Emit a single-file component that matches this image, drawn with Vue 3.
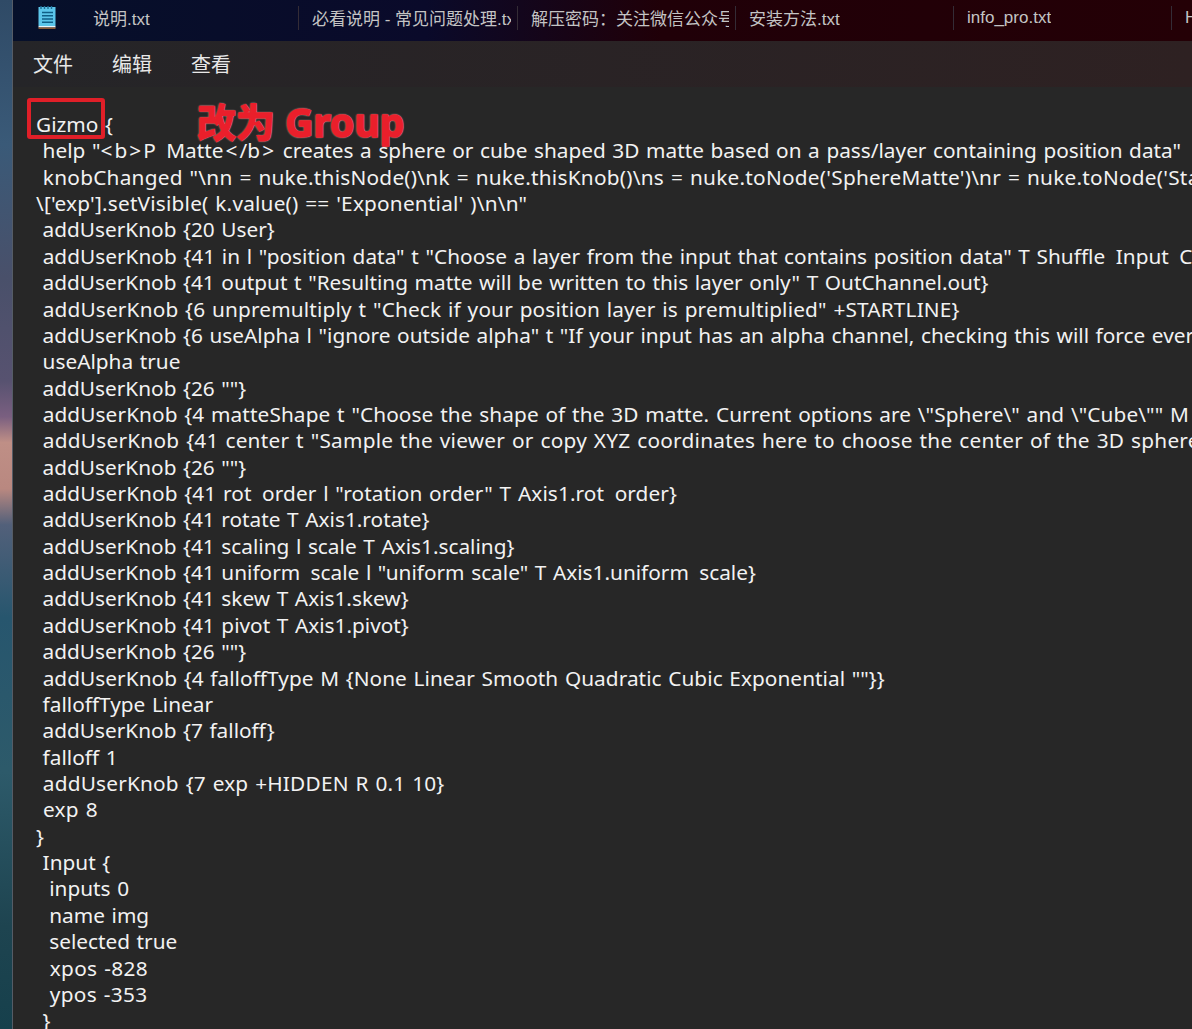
<template>
  <div class="screen">
    <div class="wallpaper"></div>
    <div class="window">
      <div class="tabbar">
        <div class="tab-icon">
          <svg width="18" height="23" viewBox="0 0 18 23">
            <rect x="0.5" y="1" width="17" height="19" fill="#5cc6ea" />
            <rect x="0.5" y="20" width="17" height="1.500" fill="#e8f4f8" />
            <rect x="0.5" y="21.500" width="17" height="1.500" fill="#8a5a34" />
            <path d="M3 0v3M6.500 0v3M10 0v3M13.500 0v3" stroke="#1f6f96" stroke-width="1.400" />
            <path d="M4 6.500h11M4 9.800h11M4 13h11M4 16.300h11" stroke="#0f5f86" stroke-width="1.600" />
          </svg>
        </div>
        <div v-for="tab in tabs" :key="tab.label" class="tab" :style="{ width: tab.width + 'px' }">
          <span class="tab-label">{{ tab.label }}</span>
        </div>
      </div>
      <div class="menubar">
        <span v-for="item in menus" :key="item" class="menu-item">{{ item }}</span>
      </div>
      <div class="editor">
        <div class="callout">
          <span class="callout-box"></span>
          <span class="callout-text">改为 Group</span>
        </div>
        <div
          v-for="(line, i) in lines"
          :key="i"
          class="line"
          :style="{ letterSpacing: (spread[i] || 0) + 'px' }"
        >{{ line }}</div>
      </div>
    </div>
  </div>
</template>

<script setup>
const tabs = [
  { label: '说明.txt', width: 219 },
  { label: '必看说明 - 常见问题处理.txt', width: 219 },
  { label: '解压密码：关注微信公众号', width: 218 },
  { label: '安装方法.txt', width: 218 },
  { label: 'info_pro.txt', width: 218 },
  { label: 'H', width: 60 }
]

const menus = ['文件', '编辑', '查看']

// underscores are cut off by the line box in the original, so they read as a gap
const lines = [
  'Gizmo {',
  ' help "<\u200Ab\u200A>\u200AP\u2002Matte\u200A<\u200A/b\u200A>\u200A creates a sphere or cube shaped 3D matte based on a pass/layer containing position data" ',
  ' knobChanged "\\nn = nuke.thisNode()\\nk = nuke.thisKnob()\\ns = nuke.toNode(\'SphereMatte\')\\nr = nuke.toNode(\'Start',
  '\\[\'exp\'].setVisible( k.value() == \'Exponential\' )\\n\\n"',
  ' addUserKnob {20 User}',
  ' addUserKnob {41 in l "position data" t "Choose a layer from the input that contains position data" T Shuffle\u2002Input\u2002Channel',
  ' addUserKnob {41 output t "Resulting matte will be written to this layer only" T OutChannel.out}',
  ' addUserKnob {6 unpremultiply t "Check if your position layer is premultiplied" +STARTLINE}',
  ' addUserKnob {6 useAlpha l "ignore outside alpha" t "If your input has an alpha channel, checking this will force every',
  ' useAlpha true',
  ' addUserKnob {26 ""}',
  ' addUserKnob {4 matteShape t "Choose the shape of the 3D matte. Current options are \\"Sphere\\" and \\"Cube\\"" M {Sphere',
  ' addUserKnob {41 center t "Sample the viewer or copy XYZ coordinates here to choose the center of the 3D sphere or',
  ' addUserKnob {26 ""}',
  ' addUserKnob {41 rot\u2002order l "rotation order" T Axis1.rot\u2002order}',
  ' addUserKnob {41 rotate T Axis1.rotate}',
  ' addUserKnob {41 scaling l scale T Axis1.scaling}',
  ' addUserKnob {41 uniform\u2002scale l "uniform scale" T Axis1.uniform\u2002scale}',
  ' addUserKnob {41 skew T Axis1.skew}',
  ' addUserKnob {41 pivot T Axis1.pivot}',
  ' addUserKnob {26 ""}',
  ' addUserKnob {4 falloffType M {None Linear Smooth Quadratic Cubic Exponential ""}}',
  ' falloffType Linear',
  ' addUserKnob {7 falloff}',
  ' falloff 1',
  ' addUserKnob {7 exp +HIDDEN R 0.1 10}',
  ' exp 8',
  '}',
  ' Input {',
  '  inputs 0',
  '  name img',
  '  selected true',
  '  xpos -828',
  '  ypos -353',
  ' }'
]

const spread = {
  2: 0.25,
  3: 0.2,
  5: 0.03,
  7: 0.16,
  11: 0.1,
  12: 0.24,
  14: 0.1,
  21: 0.05,
  25: 0.2,
  26: 0.3,
  32: 0.3,
  33: 0.3
}
</script>

<style scoped>
.screen {
  width: 1192px;
  height: 1029px;
  display: flex;
  overflow: hidden;
  font-family: "Noto Sans", "Noto Sans CJK SC", sans-serif;
}

.wallpaper {
  width: 13px;
  flex-shrink: 0;
  box-sizing: border-box;
  border-right: 1px solid #555c66;
  background: linear-gradient(180deg, #2f4a66 0%, #3a5a78 14%, #49506a 27%, #575270 37%, #7a5f80 40.500%, #bf8f86 43%, #b98880 47.500%, #52607a 51%, #27566e 60%, #2d5a6a 75%, #1e4450 90%, #16404c 100%);
}

.window {
  flex: 1;
  min-width: 0;
  display: flex;
  flex-direction: column;
}

.tabbar {
  height: 41px;
  flex-shrink: 0;
  display: flex;
  align-items: center;
  padding-bottom: 6px;
  box-sizing: border-box;
  background: linear-gradient(90deg, #06102a 0%, #0a0a2a 35%, #200008 55%, #240006 100%);
  color: #c4c4c4;
  font-family: "Liberation Sans", "Noto Sans CJK SC", sans-serif;
  font-size: 17px;
}

.tab-icon {
  width: 67px;
  flex-shrink: 0;
  padding-left: 25px;
  box-sizing: border-box;
  display: flex;
}

.tab {
  height: 24px;
  flex-shrink: 0;
  display: flex;
  align-items: center;
  box-sizing: border-box;
  overflow: hidden;
  padding: 0 6px 0 13px;
  white-space: nowrap;
  border-right: 1px solid #342c36;
}

.tab-label {
  overflow: hidden;
}

.menubar {
  height: 46px;
  flex-shrink: 0;
  display: flex;
  align-items: center;
  gap: 39px;
  padding: 0 0 2px 20px;
  box-sizing: border-box;
  background: linear-gradient(90deg, #252528 0%, #2e2122 100%);
  color: #e8e8e8;
  font-size: 20px;
}

.editor {
  position: relative;
  flex: 1;
  min-height: 0;
  overflow: hidden;
  padding: 24px 0 0 23px;
  background: #272727;
  color: #f2f2f2;
  font-size: 20.800px;
  word-spacing: 1.200px;
  line-height: 26.370px;
}

.line {
  white-space: pre;
  height: 26.370px;
}

.callout {
  position: absolute;
  left: 14px;
  top: 11px;
}

.callout-box {
  display: block;
  width: 78px;
  height: 41px;
  box-sizing: border-box;
  border: 4.500px solid #e01f28;
  border-radius: 3px;
}

.callout-text {
  position: absolute;
  left: 170px;
  top: -1px;
  white-space: nowrap;
  color: #ea1f2b;
  font-size: 39px;
  line-height: 50px;
  font-weight: 700;
  word-spacing: 0;
  -webkit-text-stroke: 1.500px #ea1f2b;
  text-shadow: 0 0 2px #f6c8c8, 0 0 2px #f6c8c8;
}
</style>

<style>
body {
  background: #272727;
}
</style>
